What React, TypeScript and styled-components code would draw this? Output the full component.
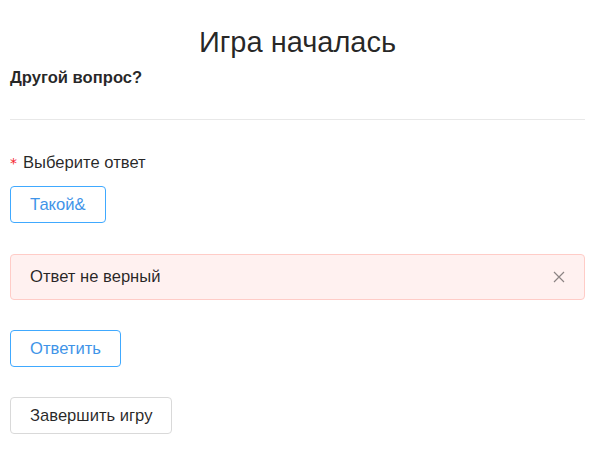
import React from "react";
import styled, { createGlobalStyle } from "styled-components";

const GlobalStyle = createGlobalStyle`
  body {
    margin: 0;
    background: #fff;
    font-family: "Liberation Sans", Arial, sans-serif;
    color: rgba(0, 0, 0, 0.85);
  }
`;

const Page = styled.div`
  width: 575px;
  margin-left: 10px;
  padding-top: 24px;
`;

const Title = styled.h1`
  margin: 0;
  font-size: 29px;
  line-height: 36px;
  font-weight: 400;
  text-align: center;
  color: rgba(0, 0, 0, 0.85);
`;

const Question = styled.h4`
  margin: 6px 0 0;
  font-size: 16.6px;
  line-height: 24px;
  font-weight: 700;
  color: rgba(0, 0, 0, 0.85);
`;

const Divider = styled.hr`
  margin: 29px 0 0;
  border: 0;
  border-top: 1px solid #e8e8e8;
  height: 0;
`;

const Label = styled.div`
  margin-top: 31px;
  font-size: 16.6px;
  line-height: 24px;
  display: flex;
  align-items: center;
`;

const Required = styled.span`
  color: #f5222d;
  font-size: 14px;
  margin-right: 6px;
  font-family: "DejaVu Sans", sans-serif;
`;

const Button = styled.button<{ $primary?: boolean }>`
  display: inline-flex;
  align-items: center;
  height: 37px;
  padding: 0 19px;
  border-radius: 4px;
  font-family: "Liberation Sans", Arial, sans-serif;
  font-size: 16.6px;
  background: #fff;
  cursor: pointer;
  border: 1px solid ${(p) => (p.$primary ? "#40a9ff" : "#d9d9d9")};
  color: ${(p) => (p.$primary ? "#3f94e8" : "rgba(0, 0, 0, 0.85)")};
`;

const Row = styled.div<{ $gap: number }>`
  margin-top: ${(p) => p.$gap}px;
  display: flex;
`;

const Alert = styled.div`
  margin-top: 31px;
  height: 46px;
  box-sizing: border-box;
  display: flex;
  align-items: center;
  justify-content: space-between;
  padding: 0 19px;
  background: #fff1f0;
  border: 1px solid #ffccc7;
  border-radius: 4px;
  font-size: 16.6px;
`;

const Close = styled.button`
  border: 0;
  background: none;
  padding: 0;
  display: flex;
  cursor: pointer;
  color: rgba(0, 0, 0, 0.45);
`;

export default function App() {
  return (
    <>
      <GlobalStyle />
      <Page>
        <Title>Игра началась</Title>
        <Question>Другой вопрос?</Question>
        <Divider />
        <Label>
          <Required>*</Required>
          Выберите ответ
        </Label>
        <Row $gap={11}>
          <Button $primary>Такой&amp;</Button>
        </Row>
        <Alert>
          <span>Ответ не верный</span>
          <Close aria-label="close">
            <svg width="12" height="12" viewBox="0 0 12 12">
              <path d="M1 1L11 11M11 1L1 11" stroke="currentColor" strokeWidth="1.2" />
            </svg>
          </Close>
        </Alert>
        <Row $gap={30}>
          <Button $primary>Ответить</Button>
        </Row>
        <Row $gap={30}>
          <Button>Завершить игру</Button>
        </Row>
      </Page>
    </>
  );
}
